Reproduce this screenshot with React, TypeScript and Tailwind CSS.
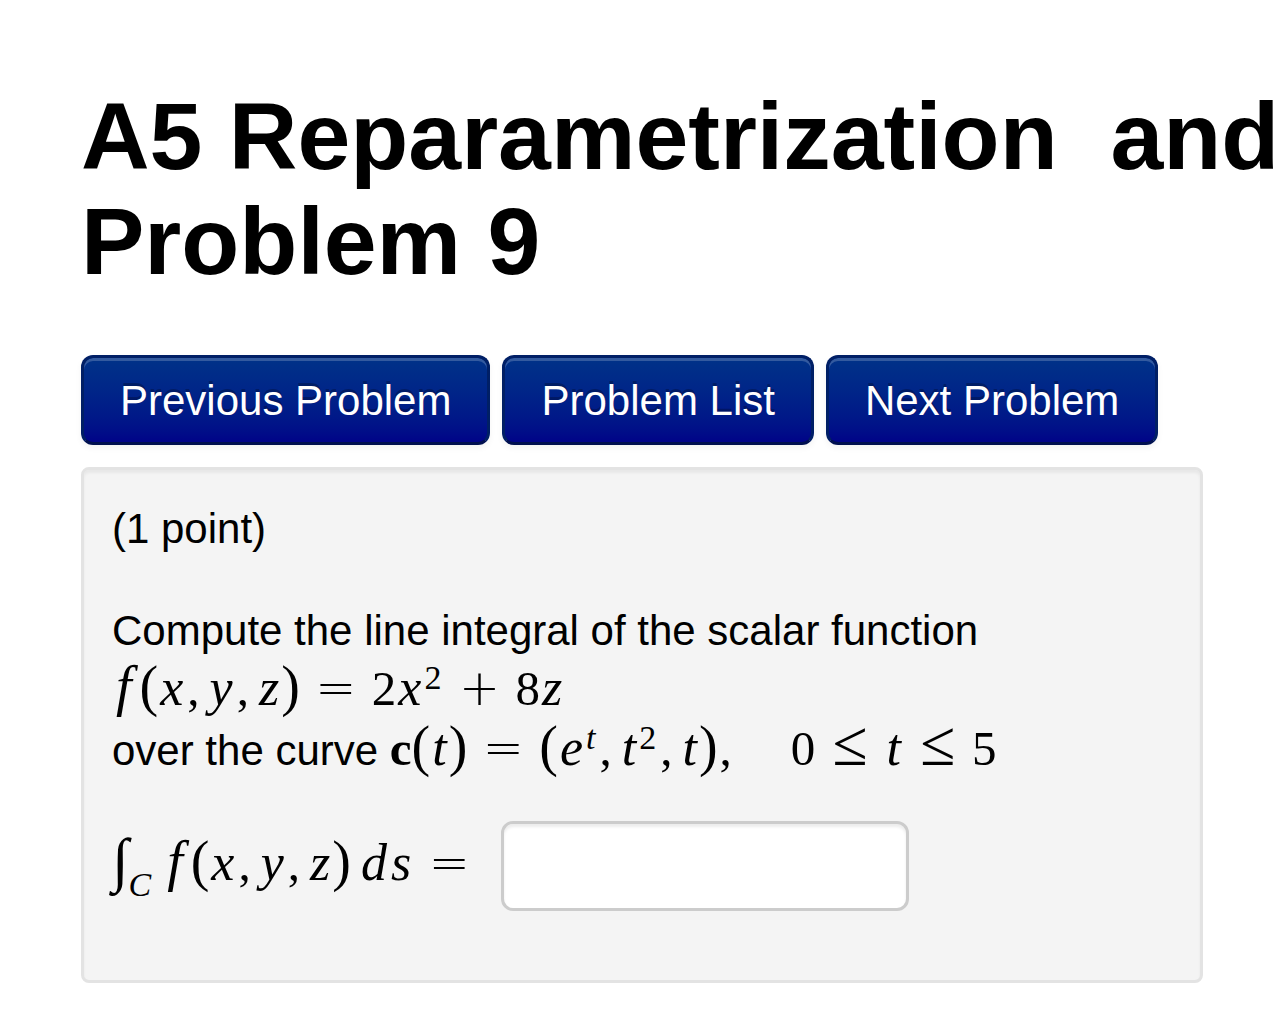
import type { ReactNode } from 'react';

type Props = { children: ReactNode };

const Formula = ({ children }: Props) => (
  <span className="font-['Liberation_Serif',serif] text-[49px] leading-0 whitespace-nowrap">{children}</span>
);

// variable
const V = ({ children }: Props) => <i className="mx-0.5 text-[52px] leading-0">{children}</i>;

const Paren = ({ children }: Props) => <span className="text-[56px] leading-0">{children}</span>;

const Comma = () => <span className="mr-2 ml-0.5">,</span>;

const Sup = ({ children }: Props) => (
  <sup className="-top-4 mr-0.5 ml-px align-baseline text-[34px] leading-0">{children}</sup>
);

// relation or operator sign
const Op = ({ children }: Props) => (
  <span className="mx-4 inline-flex w-10 justify-center font-['DejaVu_Sans_Light','DejaVu_Sans',sans-serif] text-[49px] leading-0 font-extralight">
    {children}
  </span>
);

const Leq = () => <span className="mx-[17px] text-[64px] leading-0">≤</span>;

const Fxyz = () => (
  <>
    <i className="mr-2 ml-1 text-[56px] leading-0">f</i>
    <Paren>(</Paren>
    <V>x</V>
    <Comma />
    <V>y</V>
    <Comma />
    <V>z</V>
    <Paren>)</Paren>
  </>
);

const navLinks = ['Previous Problem', 'Problem List', 'Next Problem'];

export default function App() {
  return (
    <main className="min-h-screen overflow-x-hidden bg-white px-[81px] pt-[84px] pb-[38px] font-['Liberation_Sans',Arial,sans-serif] text-black">
      <h1 className="text-[95px] leading-[105px] font-bold whitespace-nowrap">
        A5 Reparametrization&nbsp; and
        <br />
        Problem 9
      </h1>

      <nav className="mt-[61px] flex gap-3 whitespace-nowrap">
        {navLinks.map((label) => (
          <a
            key={label}
            href="#"
            className="rounded-xl border-[3px] border-[#001f66] border-b-[#00104f] bg-linear-to-b from-[#003388] to-[#000088] bg-origin-border px-9 pt-0.5 text-[42px] leading-[82px] text-white shadow-[inset_0_3px_0_rgba(255,255,255,0.2),0_3px_6px_rgba(0,0,0,0.05)] text-shadow-[0_-3px_0_rgba(0,0,0,0.25)]"
          >
            {label}
          </a>
        ))}
      </nav>

      <section className="mt-[22px] rounded-lg border-[3px] border-[#e3e3e3] bg-[#f4f4f4] px-7 pt-[29px] pb-[69px] text-[42px] leading-[60px] shadow-[inset_0_3px_3px_rgba(0,0,0,0.05)]">
        <p>(1 point)</p>
        <p className="mt-[42px]">Compute the line integral of the scalar function</p>
        <p>
          <Formula>
            <Fxyz />
            <Op>=</Op>2<V>x</V>
            <Sup>2</Sup>
            <Op>+</Op>8<V>z</V>
          </Formula>
        </p>
        <p>
          over the curve{' '}
          <Formula>
            <b>c</b>
            <Paren>(</Paren>
            <V>t</V>
            <Paren>)</Paren>
            <Op>=</Op>
            <Paren>(</Paren>
            <V>e</V>
            <Sup>
              <i>t</i>
            </Sup>
            <Comma />
            <V>t</V>
            <Sup>2</Sup>
            <Comma />
            <V>t</V>
            <Paren>)</Paren>
            <Comma />
            <span className="ml-[51px]">0</span>
            <Leq />
            <V>t</V>
            <Leq />5
          </Formula>
        </p>
        <div className="mt-10 flex items-center gap-4">
          <label htmlFor="answer">
            <Formula>
              <span className="text-[60px] leading-0 italic">∫</span>
              <sub className="top-4 mr-3 align-baseline text-[34px] leading-0 italic">C</sub>
              <Fxyz />
              <span className="ml-2">
                <V>d</V>
                <V>s</V>
              </span>
              <Op>=</Op>
            </Formula>
          </label>
          <input
            id="answer"
            type="text"
            className="h-[90px] w-[408px] rounded-xl border-[3px] border-[#ccc] bg-white px-4 shadow-[inset_0_3px_3px_rgba(0,0,0,0.075)]"
          />
        </div>
      </section>
    </main>
  );
}
